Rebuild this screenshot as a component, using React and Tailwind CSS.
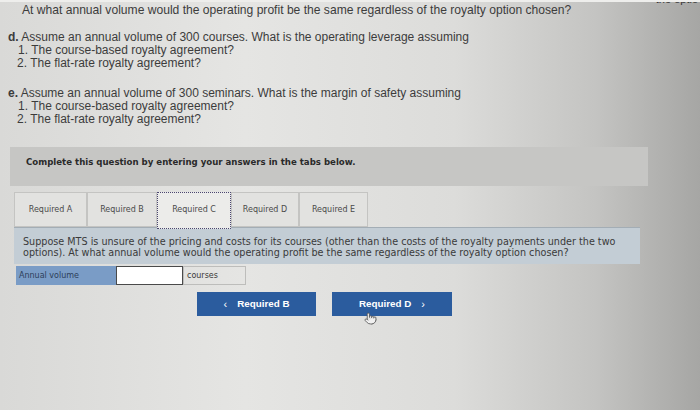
import React from "react";
import { Pointer } from "lucide-react";

const q = "font-['Liberation_Sans',Arial,sans-serif]";
const v = "font-['DejaVu_Sans','Verdana',sans-serif]";

function Tab({ label, w, selected }) {
  return (
    <div
      className={
        "flex h-[35px] items-center justify-center text-[8px] text-[#4a4a4a] " +
        (selected
          ? "relative z-10 -mb-[2px] h-[37px] border border-dotted border-[#4b4670] bg-[#ececea] pb-[2px]"
          : "border border-[#c4c4c2] bg-[#e2e2e0]")
      }
      style={{ width: w }}
    >
      {label}
    </div>
  );
}

export default function App() {
  return (
    <div
      className={
        "relative h-[410px] w-[700px] overflow-hidden border-t-2 border-[#eeeeec] bg-[linear-gradient(to_right,#d9d9d7,#e5e5e3_35%,#dcdcda_65%,#c4c4c2_85%,#a6a6a4)] " +
        q
      }
    >
      <div className="absolute right-[2px] -top-[9px] text-[11px] leading-[12px] text-[#333]">the optio</div>

      <div className="pl-[22px] pt-[2px] text-[12.1px] leading-[13px] text-[#3c3c3c]">
        At what annual volume would the operating profit be the same regardless of the royalty option chosen?
      </div>

      <div className="mt-[14px] pl-[8px] text-[12px] leading-[13px] text-[#3c3c3c]">
        <div>
          <span className="font-bold">d.</span> Assume an annual volume of 300 courses. What is the operating leverage assuming
        </div>
        <div className="pl-[10px]">1. The course-based royalty agreement?</div>
        <div className="pl-[9px]">2. The flat-rate royalty agreement?</div>
      </div>

      <div className="mt-[17px] pl-[8px] text-[12px] leading-[13px] text-[#3c3c3c]">
        <div>
          <span className="font-bold">e.</span> Assume an annual volume of 300 seminars. What is the margin of safety assuming
        </div>
        <div className="pl-[10px]">1. The course-based royalty agreement?</div>
        <div className="pl-[9px]">2. The flat-rate royalty agreement?</div>
      </div>

      <div
        className={
          "ml-[10px] mt-[21px] h-[39px] w-[638px] bg-[#c6c6c4] pl-[16px] pt-[9px] text-[8.6px] font-bold text-[#2a2a2a] " +
          v
        }
      >
        Complete this question by entering your answers in the tabs below.
      </div>

      <div className={"ml-[14px] mt-[6px] flex items-start " + v}>
        <Tab label="Required A" w={73} />
        <Tab label="Required B" w={70} />
        <Tab label="Required C" w={74} selected />
        <Tab label="Required D" w={68} />
        <Tab label="Required E" w={69} />
      </div>

      <div
        className={
          "ml-[14px] h-[37px] w-[626px] border-t border-[#a3adb5] bg-[#c3cdd5] px-[9px] pt-[8px] text-[9.65px] leading-[11px] text-[#3a3a3a] " +
          v
        }
      >
        Suppose MTS is unsure of the pricing and costs for its courses (other than the costs of the royalty payments under the two
        <br />
        options). At what annual volume would the operating profit be the same regardless of the royalty option chosen?
      </div>

      <div className={"ml-[16px] mt-[2px] flex h-[19px] text-[8px] " + v}>
        <div className="flex w-[100px] items-center bg-[#7a9cc6] pl-[3px] text-[#2d3f5a]">Annual volume</div>
        <div className="w-[67px] border border-[#4a4a4a] bg-white"></div>
        <div className="flex w-[63px] items-center border border-[#bdbdbb] pl-[3px] text-[#3a3a3a]">courses</div>
      </div>

      <div className="mt-[7px] flex gap-[16px] pl-[197px] font-['Liberation_Sans',Arial,sans-serif] text-[9.8px] font-bold text-white">
        <div className="flex h-[24px] w-[119px] items-center justify-center gap-[10px] bg-[#2b5c9e]">
          <span className="text-[11px] font-normal">&lsaquo;</span>
          <span>Required B</span>
        </div>
        <div className="flex h-[24px] w-[120px] items-center justify-center gap-[10px] bg-[#2b5c9e]">
          <span>Required D</span>
          <span className="text-[11px] font-normal">&rsaquo;</span>
        </div>
      </div>

      <div className="absolute left-[364px] top-[310px]">
        <Pointer size={13} strokeWidth={1.6} className="fill-[#f0f0f0] text-[#555]" />
      </div>
    </div>
  );
}
